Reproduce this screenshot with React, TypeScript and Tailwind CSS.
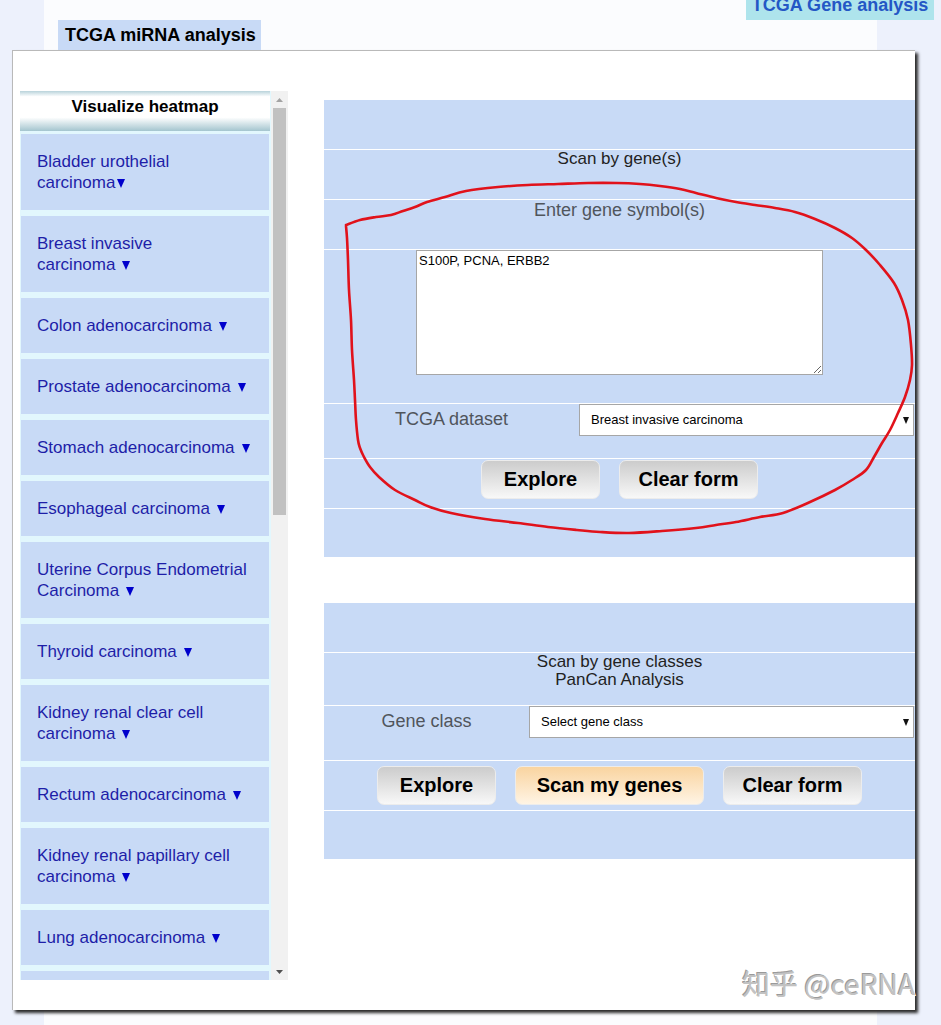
import React from 'react';

type Cancer = { lines: string[]; tight?: boolean };

const cancers: Cancer[] = [
  { lines: ['Bladder urothelial', 'carcinoma'], tight: true },
  { lines: ['Breast invasive', 'carcinoma'] },
  { lines: ['Colon adenocarcinoma'] },
  { lines: ['Prostate adenocarcinoma'] },
  { lines: ['Stomach adenocarcinoma'] },
  { lines: ['Esophageal carcinoma'] },
  { lines: ['Uterine Corpus Endometrial', 'Carcinoma'] },
  { lines: ['Thyroid carcinoma'] },
  { lines: ['Kidney renal clear cell', 'carcinoma'] },
  { lines: ['Rectum adenocarcinoma'] },
  { lines: ['Kidney renal papillary cell', 'carcinoma'] },
  { lines: ['Lung adenocarcinoma'] },
  { lines: ['Lung squamous cell', 'carcinoma'] },
];

// hand-drawn loop around the gene form
const loop: [number, number][] = [
  [346, 225], [360, 220], [376, 217], [391, 215], [403, 211], [415, 207], [427, 202], [445, 197],
  [466, 191], [498, 187], [528, 185], [558, 184], [588, 183], [617, 183], [640, 184], [660, 186],
  [680, 189], [696, 193], [716, 198], [736, 202], [755, 205], [775, 208], [795, 212], [815, 219],
  [835, 228], [852, 238], [866, 250], [880, 265], [894, 283], [902, 300], [908, 320], [911, 345],
  [912, 365], [910, 380], [905, 397], [898, 413], [890, 430], [882, 443], [874, 457], [866, 470],
  [852, 480], [835, 490], [810, 502], [783, 513], [760, 517], [736, 522], [716, 525], [696, 528],
  [662, 531], [629, 533], [600, 532], [577, 530], [548, 527], [518, 523], [485, 519], [451, 513],
  [430, 507], [415, 500], [395, 490], [379, 477], [370, 467], [364, 457], [360, 448], [358, 440],
  [356, 420], [355, 400], [354, 380], [352, 350], [351, 320], [349, 290], [348, 260], [347, 238],
  [346, 226],
];

function smoothPath(pts: [number, number][]) {
  let d = `M${pts[0][0]} ${pts[0][1]}`;
  for (let i = 0; i < pts.length - 1; i++) {
    const p0 = pts[i - 1] ?? pts[i];
    const p1 = pts[i];
    const p2 = pts[i + 1];
    const p3 = pts[i + 2] ?? p2;
    const c1x = p1[0] + (p2[0] - p0[0]) / 6;
    const c1y = p1[1] + (p2[1] - p0[1]) / 6;
    const c2x = p2[0] - (p3[0] - p1[0]) / 6;
    const c2y = p2[1] - (p3[1] - p1[1]) / 6;
    d += ` C${c1x} ${c1y} ${c2x} ${c2y} ${p2[0]} ${p2[1]}`;
  }
  return d;
}

const Caret = () => (
  <svg width="8" height="9" viewBox="0 0 8 9" className="inline-block align-baseline" fill="#0000cc">
    <path d="M0 0h8L4 9z" />
  </svg>
);

const SelectArrow = () => (
  <svg width="6" height="7" viewBox="0 0 6 7" fill="#111">
    <path d="M0 0h6L3 7z" />
  </svg>
);

function CancerItem({ lines, tight }: Cancer) {
  return (
    <div className="mb-[6px] ml-[1px] mr-[2px] bg-[#c8daf6] py-[17px] pl-4 text-[17px] leading-[21px] text-[#1e1ea8]">
      {lines.map((line, i) => (
        <div key={line} className="whitespace-nowrap">
          {line}
          {i === lines.length - 1 && (
            <span className={tight ? 'ml-[2px]' : 'ml-[7px]'}>
              <Caret />
            </span>
          )}
        </div>
      ))}
    </div>
  );
}

function FakeSelect({ value }: { value: string }) {
  return (
    <div className="mr-[1px] flex h-[32px] flex-1 items-center border border-[#a6a6a6] bg-white pl-[11px] pr-[4px] text-[13px] text-black">
      <span>{value}</span>
      <span className="ml-auto flex">
        <SelectArrow />
      </span>
    </div>
  );
}

function Btn({ label, className }: { label: string; className: string }) {
  return (
    <button
      className={`h-[39px] rounded-[7px] border border-[#ececec] text-center text-[20px] font-bold leading-[37px] text-black ${className}`}
    >
      {label}
    </button>
  );
}

const grey = 'bg-[linear-gradient(to_bottom,#cccccc,#f8f8f8)]';

export default function App() {
  return (
    <div className="relative h-[1025px] w-full overflow-hidden bg-[linear-gradient(to_right,#edf1fc_44px,#fbfcfe_44px,#fbfcfe_877px,#edf1fc_877px)] font-['Liberation_Sans',Arial,sans-serif]">
      {/* tab strip */}
      <div className="flex h-[20px] justify-end pr-[7px]">
        <div className="h-[20px] w-[188px] overflow-hidden bg-[#aee4ec] text-center text-[18px] font-bold leading-[10px] text-[#2457c5]">
          TCGA Gene analysis
        </div>
      </div>
      <div className="flex h-[30px] pl-[58px]">
        <div className="w-[203px] bg-[#c8daf6] pl-[7px] text-[18px] font-bold leading-[30px] text-black">
          TCGA miRNA analysis
        </div>
      </div>

      {/* dialog */}
      <div className="ml-[12px] flex h-[960px] w-[903px] items-start overflow-hidden border-l border-t border-[#b9b9b9] bg-white pl-[7px] pt-[40px] shadow-[3px_3px_3px_#2b2b2b]">
        {/* sidebar with scrollbar */}
        <div className="flex h-[889px] w-[268px] flex-none">
          <div className="w-[251px] overflow-hidden bg-[#e2f7fd]">
            <div className="mb-[3px] mr-[1px] h-[40px] bg-[linear-gradient(to_bottom,#b9d3db_0%,#ffffff_14%,#ffffff_66%,#a4c5cf_100%)] pt-[6px] text-center text-[17px] font-bold leading-[20px] text-black">
              Visualize heatmap
            </div>
            {cancers.map((c) => (
              <CancerItem key={c.lines.join(' ')} {...c} />
            ))}
          </div>
          <div className="flex w-[17px] flex-col bg-[#f1f1f1]">
            <div className="flex h-[17px] items-center justify-center">
              <svg width="7" height="4" viewBox="0 0 7 4" fill="#a3a3a3">
                <path d="M0 4L3.5 0L7 4z" />
              </svg>
            </div>
            <div className="mx-[2px] h-[407px] bg-[#c1c1c1]" />
            <div className="flex-1" />
            <div className="flex h-[17px] items-center justify-center">
              <svg width="7" height="4" viewBox="0 0 7 4" fill="#505050">
                <path d="M0 0h7L3.5 4z" />
              </svg>
            </div>
          </div>
        </div>

        {/* forms */}
        <div className="ml-[36px] mt-[9px] w-[591px] flex-none">
          <div className="h-[457px] bg-[#c8daf6]">
            <div className="h-[49px]" />
            <div className="h-[50px] border-t border-white text-center text-[17px] leading-[17px] text-[#222]">
              Scan by gene(s)
            </div>
            <div className="h-[50px] border-t border-white text-center text-[18px] leading-[20px] text-[#50555c]">
              Enter gene symbol(s)
            </div>
            <div className="flex h-[154px] justify-center border-t border-white">
              <textarea
                defaultValue="S100P, PCNA, ERBB2"
                className="h-[125px] w-[407px] border border-[#a6a6a6] bg-white px-[2px] pt-[2px] font-['Liberation_Sans',Arial,sans-serif] text-[13px] leading-[15px] text-black outline-none"
              />
            </div>
            <div className="flex h-[55px] items-start border-t border-white">
              <div className="w-[255px] text-center text-[18px] leading-[30px] text-[#50555c]">TCGA dataset</div>
              <FakeSelect value="Breast invasive carcinoma" />
            </div>
            <div className="flex h-[50px] justify-center gap-[19px] border-t border-white pt-[1px]">
              <Btn label="Explore" className={`w-[119px] ${grey}`} />
              <Btn label="Clear form" className={`w-[139px] ${grey}`} />
            </div>
            <div className="h-[49px] border-t border-white" />
          </div>

          <div className="mt-[46px] h-[256px] bg-[#c8daf6]">
            <div className="h-[49px]" />
            <div className="h-[53px] border-t border-white text-center text-[17px] leading-[18px] text-[#222]">
              <div>Scan by gene classes</div>
              <div>PanCan Analysis</div>
            </div>
            <div className="flex h-[55px] items-start border-t border-white">
              <div className="w-[205px] text-center text-[18px] leading-[30px] text-[#50555c]">Gene class</div>
              <FakeSelect value="Select gene class" />
            </div>
            <div className="flex h-[50px] justify-center gap-[19px] border-t border-white pt-[5px]">
              <Btn label="Explore" className={`w-[119px] ${grey}`} />
              <Btn label="Scan my genes" className="w-[189px] bg-[linear-gradient(to_bottom,#f9d4a0,#fff4e4)]" />
              <Btn label="Clear form" className={`w-[139px] ${grey}`} />
            </div>
            <div className="h-[49px] border-t border-white" />
          </div>
        </div>
      </div>

      {/* red pen annotation */}
      <svg className="pointer-events-none absolute left-0 top-0" width="941" height="1025" viewBox="0 0 941 1025">
        <path d={smoothPath(loop)} fill="none" stroke="#e1121b" strokeWidth="2.6" strokeLinecap="round" strokeLinejoin="round" />
      </svg>

      <div className="pointer-events-none absolute left-[742px] top-[966px] whitespace-nowrap font-['Noto_Sans_CJK_SC','Noto_Sans',sans-serif] text-[28px] leading-[34px] text-[#c2c2c2] [text-shadow:1px_1px_0_#ffffff,-1px_-1px_0_#9a9a9a]">
        知乎 @ceRNA
      </div>
    </div>
  );
}
